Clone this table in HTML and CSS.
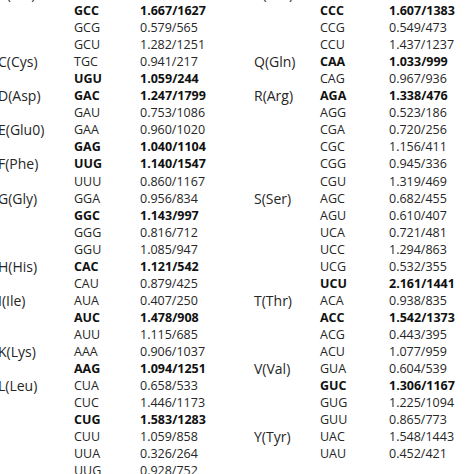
FILE: index.html
```html
<!DOCTYPE html>
<html>
<head>
<meta charset="utf-8">
<link rel="stylesheet" href="styles.css">
</head>
<body>
<div class="page">
  <div class="group group-left">
    <span class="aa">A(Ala)</span><span class="cd">GCA</span><span class="vl">0.472/460</span>
    <span class="aa"></span><span class="cd b">GCC</span><span class="vl b">1.667/1627</span>
    <span class="aa"></span><span class="cd">GCG</span><span class="vl">0.579/565</span>
    <span class="aa"></span><span class="cd">GCU</span><span class="vl">1.282/1251</span>
    <span class="aa">C(Cys)</span><span class="cd">TGC</span><span class="vl">0.941/217</span>
    <span class="aa"></span><span class="cd b">UGU</span><span class="vl b">1.059/244</span>
    <span class="aa">D(Asp)</span><span class="cd b">GAC</span><span class="vl b">1.247/1799</span>
    <span class="aa"></span><span class="cd">GAU</span><span class="vl">0.753/1086</span>
    <span class="aa">E(Glu0)</span><span class="cd">GAA</span><span class="vl">0.960/1020</span>
    <span class="aa"></span><span class="cd b">GAG</span><span class="vl b">1.040/1104</span>
    <span class="aa">F(Phe)</span><span class="cd b">UUG</span><span class="vl b">1.140/1547</span>
    <span class="aa"></span><span class="cd">UUU</span><span class="vl">0.860/1167</span>
    <span class="aa">G(Gly)</span><span class="cd">GGA</span><span class="vl">0.956/834</span>
    <span class="aa"></span><span class="cd b">GGC</span><span class="vl b">1.143/997</span>
    <span class="aa"></span><span class="cd">GGG</span><span class="vl">0.816/712</span>
    <span class="aa"></span><span class="cd">GGU</span><span class="vl">1.085/947</span>
    <span class="aa">H(His)</span><span class="cd b">CAC</span><span class="vl b">1.121/542</span>
    <span class="aa"></span><span class="cd">CAU</span><span class="vl">0.879/425</span>
    <span class="aa">I(Ile)</span><span class="cd">AUA</span><span class="vl">0.407/250</span>
    <span class="aa"></span><span class="cd b">AUC</span><span class="vl b">1.478/908</span>
    <span class="aa"></span><span class="cd">AUU</span><span class="vl">1.115/685</span>
    <span class="aa">K(Lys)</span><span class="cd">AAA</span><span class="vl">0.906/1037</span>
    <span class="aa"></span><span class="cd b">AAG</span><span class="vl b">1.094/1251</span>
    <span class="aa">L(Leu)</span><span class="cd">CUA</span><span class="vl">0.658/533</span>
    <span class="aa"></span><span class="cd">CUC</span><span class="vl">1.446/1173</span>
    <span class="aa"></span><span class="cd b">CUG</span><span class="vl b">1.583/1283</span>
    <span class="aa"></span><span class="cd">CUU</span><span class="vl">1.059/858</span>
    <span class="aa"></span><span class="cd">UUA</span><span class="vl">0.326/264</span>
    <span class="aa"></span><span class="cd">UUG</span><span class="vl">0.928/752</span>
  </div>
  <div class="group group-right">
    <span class="aa">P(Pro)</span><span class="cd">CCA</span><span class="vl">0.407/350</span>
    <span class="aa"></span><span class="cd b">CCC</span><span class="vl b">1.607/1383</span>
    <span class="aa"></span><span class="cd">CCG</span><span class="vl">0.549/473</span>
    <span class="aa"></span><span class="cd">CCU</span><span class="vl">1.437/1237</span>
    <span class="aa">Q(Gln)</span><span class="cd b">CAA</span><span class="vl b">1.033/999</span>
    <span class="aa"></span><span class="cd">CAG</span><span class="vl">0.967/936</span>
    <span class="aa">R(Arg)</span><span class="cd b">AGA</span><span class="vl b">1.338/476</span>
    <span class="aa"></span><span class="cd">AGG</span><span class="vl">0.523/186</span>
    <span class="aa"></span><span class="cd">CGA</span><span class="vl">0.720/256</span>
    <span class="aa"></span><span class="cd">CGC</span><span class="vl">1.156/411</span>
    <span class="aa"></span><span class="cd">CGG</span><span class="vl">0.945/336</span>
    <span class="aa"></span><span class="cd">CGU</span><span class="vl">1.319/469</span>
    <span class="aa">S(Ser)</span><span class="cd">AGC</span><span class="vl">0.682/455</span>
    <span class="aa"></span><span class="cd">AGU</span><span class="vl">0.610/407</span>
    <span class="aa"></span><span class="cd">UCA</span><span class="vl">0.721/481</span>
    <span class="aa"></span><span class="cd">UCC</span><span class="vl">1.294/863</span>
    <span class="aa"></span><span class="cd">UCG</span><span class="vl">0.532/355</span>
    <span class="aa"></span><span class="cd b">UCU</span><span class="vl b">2.161/1441</span>
    <span class="aa">T(Thr)</span><span class="cd">ACA</span><span class="vl">0.938/835</span>
    <span class="aa"></span><span class="cd b">ACC</span><span class="vl b">1.542/1373</span>
    <span class="aa"></span><span class="cd">ACG</span><span class="vl">0.443/395</span>
    <span class="aa"></span><span class="cd">ACU</span><span class="vl">1.077/959</span>
    <span class="aa">V(Val)</span><span class="cd">GUA</span><span class="vl">0.604/539</span>
    <span class="aa"></span><span class="cd b">GUC</span><span class="vl b">1.306/1167</span>
    <span class="aa"></span><span class="cd">GUG</span><span class="vl">1.225/1094</span>
    <span class="aa"></span><span class="cd">GUU</span><span class="vl">0.865/773</span>
    <span class="aa">Y(Tyr)</span><span class="cd">UAC</span><span class="vl">1.548/1443</span>
    <span class="aa"></span><span class="cd">UAU</span><span class="vl">0.452/421</span>
  </div>
</div>
</body>
</html>
```
FILE: styles.css
```css
html, body {
  margin: 0;
  padding: 0;
  background: #ffffff;
  overflow: hidden;
}
.page {
  display: flex;
  margin-top: -15px;
  margin-left: -2px;
  font-family: "Open Sans", "DejaVu Sans", sans-serif;
  font-size: 12.5px;
  color: #262626;
}
.group {
  display: grid;
  grid-auto-rows: 17.05px;
  align-items: center;
  line-height: 17px;
  white-space: nowrap;
}
.group-left {
  width: 256px;
  grid-template-columns: 76px 66px auto;
}
.group-right {
  grid-template-columns: 66px 69px auto;
}
.aa {
  font-size: 14px;
}
.b {
  font-weight: 700;
  color: #111111;
}
```
